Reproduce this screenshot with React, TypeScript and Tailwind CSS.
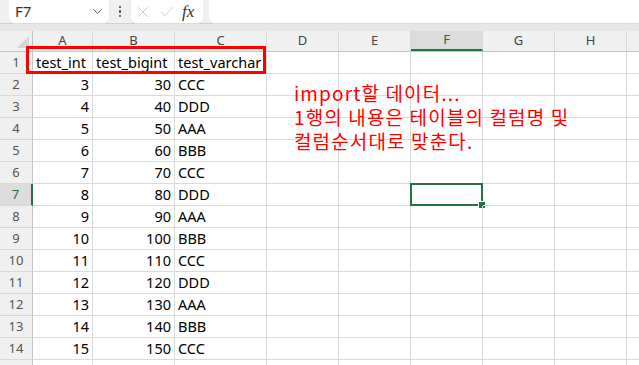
import { ChevronDown, X, Check } from 'lucide-react';

const COLS = ['A', 'B', 'C', 'D', 'E', 'F', 'G', 'H', 'I'];
const WIDTHS = ['w-[60px]', 'w-[82px]', 'w-[92px]', 'w-[72px]', 'w-[72px]', 'w-[72px]', 'w-[72px]', 'w-[72px]', 'w-[72px]'];
const LABELS = ['CCC', 'DDD', 'AAA', 'BBB'];

type Row = { n: number; a: string; b: string; c: string; header?: boolean };

const rows: Row[] = [
  { n: 1, a: 'test_int', b: 'test_bigint', c: 'test_varchar', header: true },
  ...Array.from({ length: 14 }, (_, i) => ({
    n: i + 2,
    a: String(i + 3),
    b: String((i + 3) * 10),
    c: LABELS[i % 4],
  })),
];

function FormulaBar() {
  return (
    <div className="flex h-[24px] items-stretch bg-[#f0f0f0] border-b border-[#d0d0d0]">
      <div className="ml-[9px] flex w-[100px] h-[23px] items-center justify-between rounded-b-[5px] bg-white pl-[6px] pr-[4px] shadow-[0_1px_0_#dcdcdc]">
        <span className="text-[15px] text-[#333]">F7</span>
        <ChevronDown size={15} strokeWidth={1.6} className="text-[#555]" />
      </div>
      <div className="flex w-[22px] flex-col items-center justify-center gap-[2px]">
        <span className="h-[2.5px] w-[2.5px] rounded-full bg-[#444]" />
        <span className="h-[2.5px] w-[2.5px] rounded-full bg-[#444]" />
        <span className="h-[2.5px] w-[2.5px] rounded-full bg-[#444]" />
      </div>
      <div className="flex w-[72px] h-[23px] items-center gap-[6px] rounded-b-[5px] bg-white pl-[3px] shadow-[0_1px_0_#dcdcdc]">
        <X size={18} strokeWidth={1.2} className="text-[#c6c6c6]" />
        <Check size={18} strokeWidth={1.2} className="text-[#c6c6c6]" />
        <span className="text-[17px] italic text-[#333] [font-family:'Liberation_Serif',serif]">fx</span>
      </div>
      <div className="ml-[6px] flex-1 h-[23px] rounded-bl-[5px] bg-white shadow-[0_1px_0_#dcdcdc]" />
    </div>
  );
}

export default function App() {
  return (
    <div className="relative h-[365px] w-[639px] overflow-hidden bg-white [font-family:'Noto_Sans','Noto_Sans_CJK_KR',sans-serif]">
      <FormulaBar />
      <div className="h-[7px] bg-[#e6e6e6]" />

      {/* column headers */}
      <div className="flex h-[21px] bg-[#f0f0f0] border-b border-[#c4c4c4]">
        <div className="relative w-[33px] shrink-0 border-r border-[#c4c4c4]">
          <svg className="absolute right-[3px] bottom-[3px]" width="12" height="12" viewBox="0 0 12 12">
            <path d="M12 0 L12 12 L0 12 Z" fill="#d6d6d6" />
          </svg>
        </div>
        {COLS.map((c, i) => (
          <div
            key={c}
            className={`${WIDTHS[i]} shrink-0 flex items-center justify-center border-r border-[#d9d9d9] text-[13px] ${
              c === 'F' ? 'bg-[#dcdcdc] text-[#1e6b40] border-b-2 border-b-[#217346]' : 'text-[#444]'
            }`}
          >
            {c}
          </div>
        ))}
      </div>

      {/* rows */}
      {rows.map((r) => (
        <div key={r.n} className="flex h-[22px]">
          <div
            className={`w-[33px] shrink-0 flex items-center justify-center border-b border-[#d9d9d9] text-[13px] ${
              r.n === 7
                ? 'bg-[#dcdcdc] text-[#1e6b40] border-r-2 border-r-[#217346]'
                : 'bg-[#f0f0f0] text-[#555] border-r border-r-[#c4c4c4]'
            }`}
          >
            {r.n}
          </div>
          {COLS.map((c, i) => {
            const val = c === 'A' ? r.a : c === 'B' ? r.b : c === 'C' ? r.c : '';
            const right = !r.header && (c === 'A' || c === 'B');
            return (
              <div
                key={c}
                className={`${WIDTHS[i]} relative shrink-0 flex items-center border-r border-b border-[#dadada] px-[3px] text-[14.5px] text-black whitespace-nowrap ${
                  right ? 'justify-end' : 'justify-start'
                }`}
              >
                {val}
                {c === 'F' && r.n === 7 && (
                  <div className="absolute left-[-1px] top-[-1px] h-[23px] w-[73px] border-2 border-[#217346]">
                    <span className="absolute right-[-4px] bottom-[-4px] h-[6px] w-[6px] bg-[#217346] ring-1 ring-white" />
                  </div>
                )}
              </div>
            );
          })}
        </div>
      ))}

      {/* red highlight box over header row */}
      <div className="absolute left-[26px] top-[46px] h-[28px] w-[240px] border-[3px] border-[#ff0000]" />

      {/* note text */}
      <div className="absolute left-[294px] top-[81px] text-[19px] leading-[24px] tracking-[0.06em] text-[#ff0000] [font-family:'Noto_Sans_CJK_KR',sans-serif]">
        <div>import할 데이터...</div>
        <div>1행의 내용은 테이블의 컬럼명 및</div>
        <div>컬럼순서대로 맞춘다.</div>
      </div>
    </div>
  );
}
